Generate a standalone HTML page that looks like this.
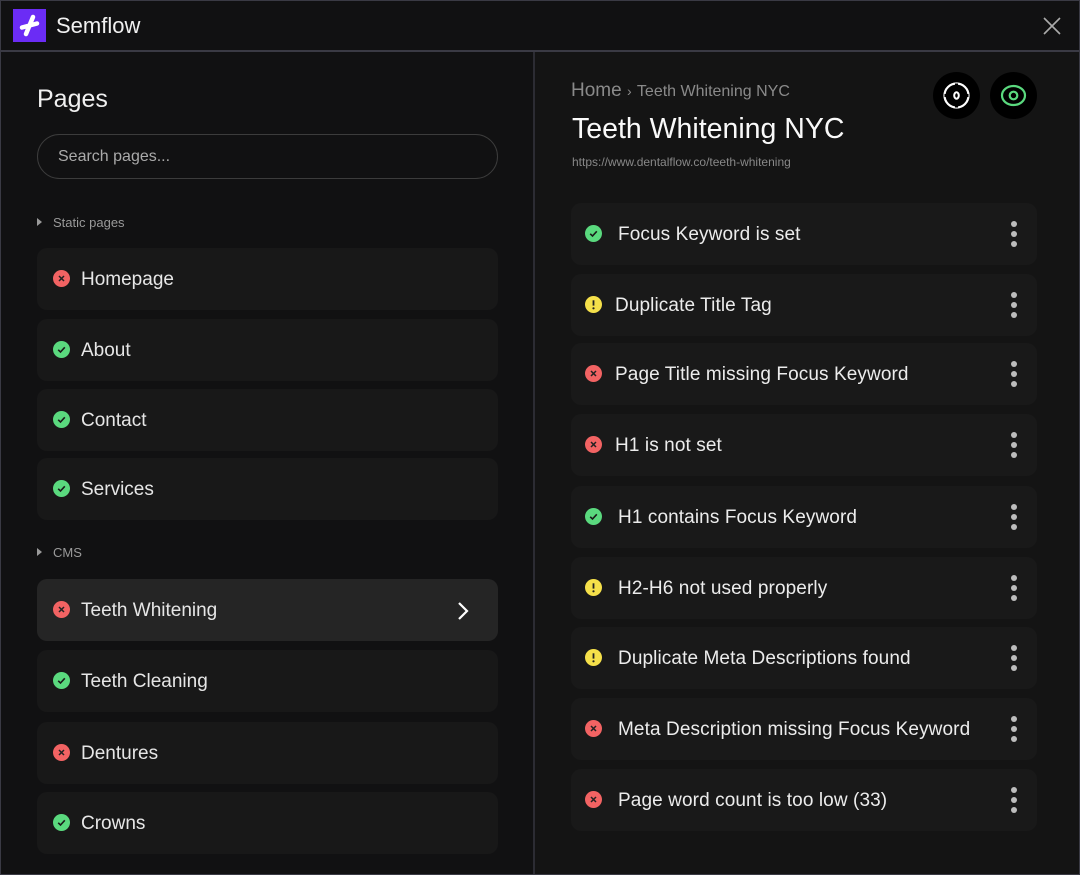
<!DOCTYPE html>
<html><head><meta charset="utf-8"><style>
*{box-sizing:border-box;margin:0;padding:0}
body{width:1080px;height:875px;background:#111112;font-family:"Liberation Sans",sans-serif;color:#e8e8e8;position:relative;overflow:hidden}
.frame{position:absolute;inset:0;border:1px solid #3a3a44}
.hdr{position:absolute;left:0;top:0;width:1080px;height:52px;border-bottom:2px solid #3a3a44;background:#111112}
.logo{position:absolute;left:13px;top:9px;width:33px;height:33px;background:#6b2cf5}
.brand{position:absolute;left:56px;top:13px;font-size:22px;color:#f0f0f0}
.close{position:absolute;left:1042px;top:16px}
.div{position:absolute;left:533px;top:52px;width:2px;height:823px;background:#2c2c33}
.right{position:absolute;left:535px;top:52px;right:1px;bottom:1px;background:#141414}
.abs{position:absolute}
.item{position:absolute;left:37px;width:461px;height:62px;background:#181818;border-radius:10px}
.item .t{position:absolute;left:44px;top:21px;font-size:19px;color:#e6e6e6}
.ic{position:absolute;width:17px;height:17px}
.item .ic{left:16px;top:22px}
.sec{position:absolute;left:37px;font-size:13px;color:#9a9a9a}
.sec:before{content:"";display:inline-block;border-left:5px solid #9a9a9a;border-top:4px solid transparent;border-bottom:4px solid transparent;margin-right:11px;vertical-align:1px}
.ri{position:absolute;left:571px;width:466px;height:62px;background:#191919;border-radius:10px}
.ri .ic{left:14px;top:22px}
.ri .t{position:absolute;left:47px;top:21px;font-size:19px;letter-spacing:0.1px;color:#ececec}
.dots{position:absolute;left:440px;top:18px;width:6px}
.dots i{display:block;width:6px;height:6px;border-radius:50%;background:#bdbdbd;margin-bottom:4px}
</style></head><body>
<svg width="0" height="0" style="position:absolute">
<defs>
<symbol id="r" viewBox="0 0 17 17"><circle cx="8.5" cy="8.5" r="8.5" fill="#f26363"/><path d="M6 6L11 11M11 6L6 11" stroke="#222" stroke-width="1.5"/></symbol>
<symbol id="g" viewBox="0 0 17 17"><circle cx="8.5" cy="8.5" r="8.5" fill="#5ad97e"/><path d="M5.2 8.8L7.5 11L11.8 6.3" stroke="#1a1a1a" stroke-width="1.6" fill="none"/></symbol>
<symbol id="y" viewBox="0 0 17 17"><circle cx="8.5" cy="8.5" r="8.5" fill="#f5e04a"/><path d="M8.5 4.3V9.6" stroke="#222" stroke-width="1.8"/><circle cx="8.5" cy="12.3" r="1.1" fill="#222"/></symbol>
</defs></svg>
<div class="right"></div>
<div class="hdr">
<div class="logo"><svg width="33" height="33" viewBox="0 0 33 33"><path d="M9 18.5 L24 14.5 M20 8 L13 25" stroke="#fff" stroke-width="4.5" stroke-linecap="round"/></svg></div>
<div class="brand">Semflow</div>
<svg class="close" width="20" height="20" viewBox="0 0 20 20"><path d="M2 2L18 18M18 2L2 18" stroke="#aaa" stroke-width="1.6"/></svg>
</div>
<div class="div"></div>
<div class="abs" style="left:37px;top:85px;font-size:25px;color:#f0f0f0">Pages</div>
<div class="abs" style="left:37px;top:134px;width:461px;height:45px;border:1.5px solid #3c3c3c;border-radius:23px;"><span style="position:absolute;left:20px;top:13px;font-size:16px;color:#aaa">Search pages...</span></div>
<div class="sec" style="top:215px">Static pages</div>
<div class="item" style="top:248px"><svg class="ic"><use href="#r"/></svg><div class="t">Homepage</div></div>
<div class="item" style="top:319px"><svg class="ic"><use href="#g"/></svg><div class="t">About</div></div>
<div class="item" style="top:389px"><svg class="ic"><use href="#g"/></svg><div class="t">Contact</div></div>
<div class="item" style="top:458px"><svg class="ic"><use href="#g"/></svg><div class="t">Services</div></div>
<div class="sec" style="top:545px">CMS</div>
<div class="item" style="top:579px;background:#252525"><svg class="ic"><use href="#r"/></svg><div class="t">Teeth Whitening</div><svg class="abs" style="left:419px;top:22px" width="14" height="20" viewBox="0 0 14 20"><path d="M3 2L11 10L3 18" stroke="#fff" stroke-width="2.2" fill="none"/></svg></div>
<div class="item" style="top:650px"><svg class="ic"><use href="#g"/></svg><div class="t">Teeth Cleaning</div></div>
<div class="item" style="top:722px"><svg class="ic"><use href="#r"/></svg><div class="t">Dentures</div></div>
<div class="item" style="top:792px"><svg class="ic"><use href="#g"/></svg><div class="t">Crowns</div></div>

<div class="abs" style="left:571px;top:80px;font-size:19px;color:#8a8a8a">Home <span style="font-size:14px">›</span> <span style="font-size:16px">Teeth Whitening NYC</span></div>
<div class="abs" style="left:572px;top:113px;font-size:28.5px;color:#fafafa">Teeth Whitening NYC</div>
<div class="abs" style="left:572px;top:155px;font-size:12px;color:#888">https://www.dentalflow.co/teeth-whitening</div>
<div class="abs" style="left:933px;top:72px;width:47px;height:47px;border-radius:50%;background:#000"><svg width="47" height="47" viewBox="0 0 47 47"><circle cx="23.5" cy="23.5" r="12" stroke="#fff" stroke-width="2.2" fill="none"/><path d="M23.5 11.5v3M23.5 32.5v3M11.5 23.5h3M32.5 23.5h3" stroke="#000" stroke-width="3"/><ellipse cx="23.5" cy="23.5" rx="2.3" ry="3.2" stroke="#fff" stroke-width="2" fill="none"/></svg></div>
<div class="abs" style="left:990px;top:72px;width:47px;height:47px;border-radius:50%;background:#000"><svg width="47" height="47" viewBox="0 0 47 47"><ellipse cx="23.5" cy="23.5" rx="11.5" ry="9.5" stroke="#5ad97e" stroke-width="2.2" fill="none"/><circle cx="23.5" cy="23.5" r="3.8" stroke="#5ad97e" stroke-width="2.2" fill="none"/></svg></div>

<div class="ri" style="top:203px"><svg class="ic"><use href="#g"/></svg><div class="t">Focus Keyword is set</div><div class="dots"><i></i><i></i><i></i></div></div>
<div class="ri" style="top:274px"><svg class="ic"><use href="#y"/></svg><div class="t" style="left:44px">Duplicate Title Tag</div><div class="dots"><i></i><i></i><i></i></div></div>
<div class="ri" style="top:343px"><svg class="ic"><use href="#r"/></svg><div class="t" style="left:44px">Page Title missing Focus Keyword</div><div class="dots"><i></i><i></i><i></i></div></div>
<div class="ri" style="top:414px"><svg class="ic"><use href="#r"/></svg><div class="t" style="left:44px">H1 is not set</div><div class="dots"><i></i><i></i><i></i></div></div>
<div class="ri" style="top:486px"><svg class="ic"><use href="#g"/></svg><div class="t">H1 contains Focus Keyword</div><div class="dots"><i></i><i></i><i></i></div></div>
<div class="ri" style="top:557px"><svg class="ic"><use href="#y"/></svg><div class="t">H2-H6 not used properly</div><div class="dots"><i></i><i></i><i></i></div></div>
<div class="ri" style="top:627px"><svg class="ic"><use href="#y"/></svg><div class="t">Duplicate Meta Descriptions found</div><div class="dots"><i></i><i></i><i></i></div></div>
<div class="ri" style="top:698px"><svg class="ic"><use href="#r"/></svg><div class="t">Meta Description missing Focus Keyword</div><div class="dots"><i></i><i></i><i></i></div></div>
<div class="ri" style="top:769px"><svg class="ic"><use href="#r"/></svg><div class="t">Page word count is too low (33)</div><div class="dots"><i></i><i></i><i></i></div></div>
<div class="frame"></div>
</body></html>
